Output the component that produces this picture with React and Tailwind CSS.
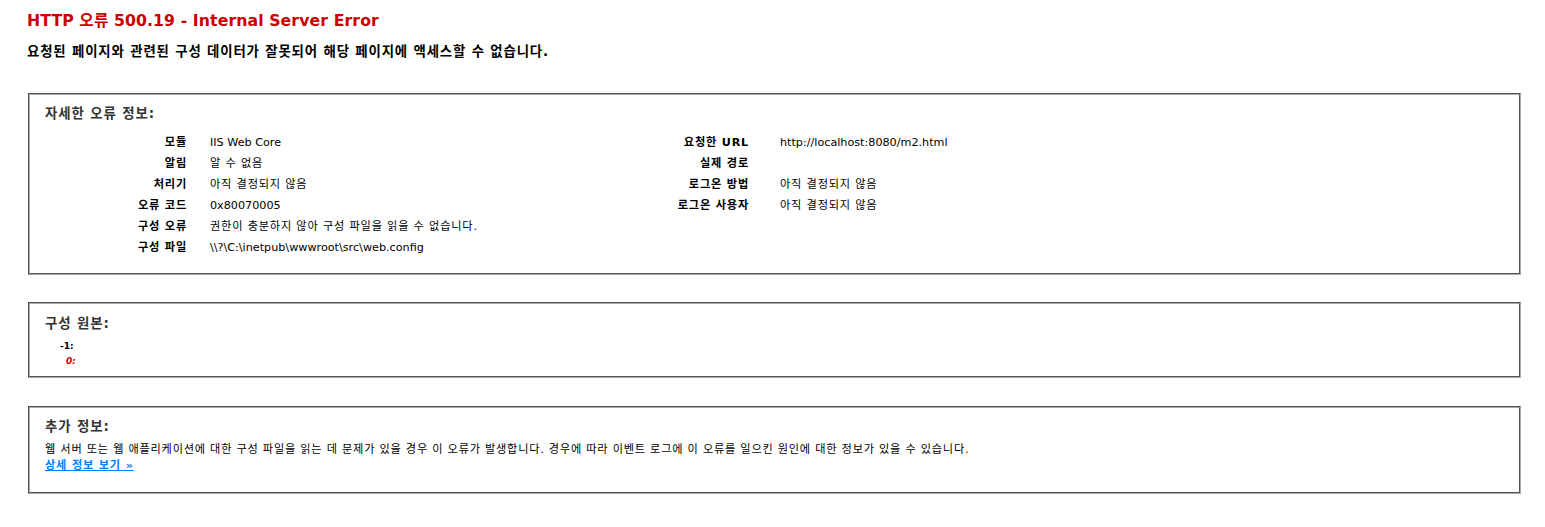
const leftRows = [
  ['모듈', 'IIS Web Core'],
  ['알림', '알 수 없음'],
  ['처리기', '아직 결정되지 않음'],
  ['오류 코드', '0x80070005'],
  ['구성 오류', '권한이 충분하지 않아 구성 파일을 읽을 수 없습니다.'],
  ['구성 파일', '\\\\?\\C:\\inetpub\\wwwroot\\src\\web.config'],
];

const rightRows = [
  ['요청한 URL', 'http://localhost:8080/m2.html'],
  ['실제 경로', ''],
  ['로그온 방법', '아직 결정되지 않음'],
  ['로그온 사용자', '아직 결정되지 않음'],
];

// Korean glyphs in the original are wider (Gulim), so space them a little
const ko = (s) => (/[가-힣]/.test(s) ? 'tracking-[0.8px]' : '');

const Box = ({ className = '', children }) => (
  <div className={`ml-[28px] w-[1493px] border-2 [border-style:groove] border-[#a8a8a8] pl-[15px] pr-[15px] ${className}`}>
    {children}
  </div>
);

const Heading = ({ children }) => (
  <div className="text-[13.4px] leading-[18px] font-bold text-[#333333] tracking-[0.9px]">{children}</div>
);

const Rows = ({ rows, labelW, gap }) => (
  <div className="flex flex-col">
    {rows.map(([k, v]) => (
      <div key={k} className="flex h-[21px] items-center">
        <div className={`text-right font-bold shrink-0 ${ko(k)}`} style={{ width: labelW }}>{k}</div>
        <div className={ko(v)} style={{ marginLeft: gap }}>{v}</div>
      </div>
    ))}
  </div>
);

export default function App() {
  return (
    <div className="bg-white min-h-[527px] text-black text-[11.2px] font-['DejaVu_Sans','Noto_Sans_CJK_KR',sans-serif] pb-[30px]">
      <div className="pl-[27px] pt-[11px]">
        <h3 className="text-[15.7px] leading-[20px] font-bold text-[#cc0000] tracking-[0.1px]">HTTP 오류 500.19 - Internal Server Error</h3>
        <h4 className="mt-[12px] text-[13.4px] leading-[18px] font-bold tracking-[0.85px]">
          요청된 페이지와 관련된 구성 데이터가 잘못되어 해당 페이지에 액세스할 수 없습니다.
        </h4>
      </div>

      <Box className="mt-[32px] pt-[10px] pb-[14px]">
        <Heading>자세한 오류 정보:</Heading>
        <div className="flex mt-[10px]">
          <div className="w-[539px] shrink-0">
            <Rows rows={leftRows} labelW="142px" gap="23px" />
          </div>
          <Rows rows={rightRows} labelW="165px" gap="31px" />
        </div>
      </Box>

      <Box className="mt-[27px] pt-[11px] pb-[7px]">
        <Heading>구성 원본:</Heading>
        <pre className="mt-[6px] pl-[15px] text-[9px] leading-[15px] font-bold font-['DejaVu_Sans',sans-serif]">
          <div>-1: </div>
          <div className="pl-[6px] text-[#cc0000] italic">0: </div>
        </pre>
      </Box>

      <Box className="mt-[28px] pt-[10px] pb-[18px]">
        <Heading>추가 정보:</Heading>
        <div className="mt-[6px] leading-[16px] tracking-[0.75px]">
          웹 서버 또는 웹 애플리케이션에 대한 구성 파일을 읽는 데 문제가 있을 경우 이 오류가 발생합니다. 경우에 따라 이벤트 로그에 이 오류를 일으킨 원인에 대한 정보가 있을 수 있습니다.
        </div>
        <a href="#" className="block leading-[16px] font-bold text-[#007eff] underline tracking-[0.8px]">상세 정보 보기 »</a>
      </Box>
    </div>
  );
}
